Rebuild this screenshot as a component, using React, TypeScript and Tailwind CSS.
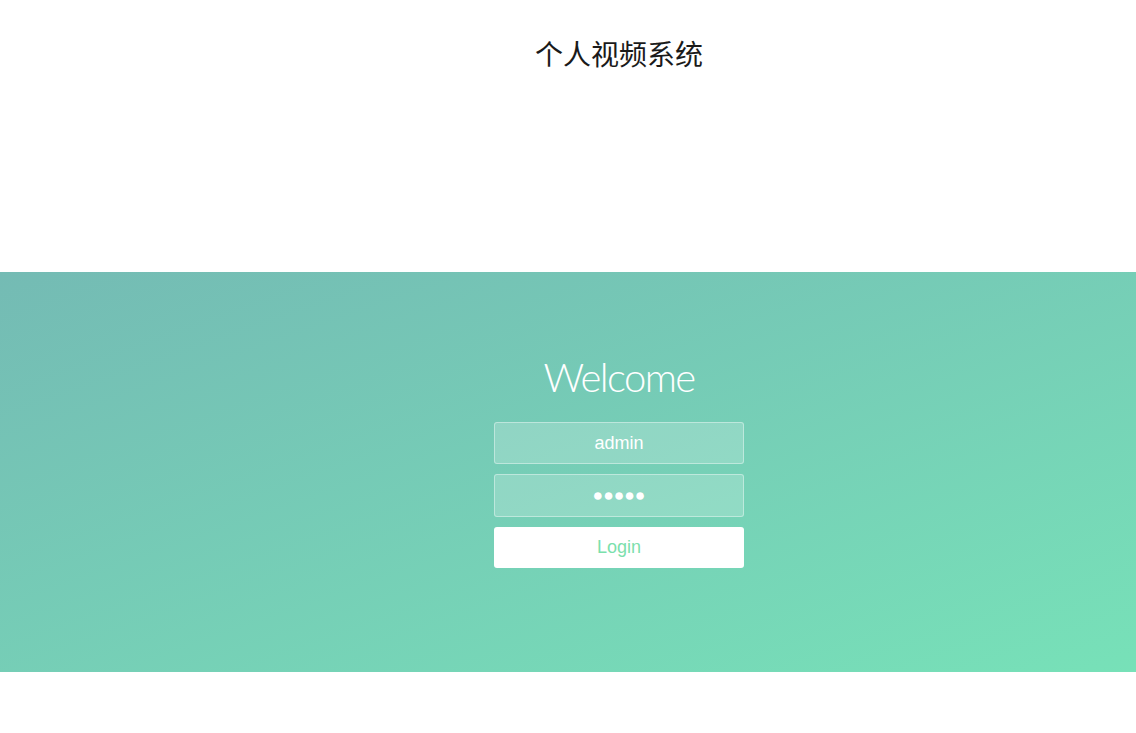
export default function App() {
  return (
    <div className="min-h-[733px] bg-white font-['Liberation_Sans',sans-serif]">
      <header className="h-[272px] pl-[102px] pt-[33px] flex justify-center">
        <h1 className="text-[28px] leading-[40px] text-[#1a1a1a] font-['Noto_Sans_CJK_SC',sans-serif]">
          个人视频系统
        </h1>
      </header>

      <section className="h-[400px] bg-gradient-to-br from-[#74bbb4] to-[#77e1b8]">
        <div className="pl-[102px] pt-[80px] flex flex-col items-center">
          <h2 className="text-[40px] leading-[50px] font-light text-white font-['Lato',sans-serif] tracking-[-1.6px]">
            Welcome
          </h2>
          <form className="mt-[20px] flex flex-col gap-[10px] w-[250px]">
            <input
              type="text"
              defaultValue="admin"
              readOnly
              className="h-[42px] w-full rounded-[3px] border border-white/40 bg-white/20 px-[15px] text-center text-[18px] text-white outline-none"
            />
            <input
              type="text"
              aria-label="password"
              defaultValue="●●●●●"
              readOnly
              className="h-[43px] w-full rounded-[3px] border border-white/40 bg-white/20 px-[15px] text-center text-[17.5px] text-white outline-none"
            />
            <button
              type="button"
              className="h-[41px] w-full rounded-[3px] bg-white text-[18px] text-[#7be0ac]"
            >
              Login
            </button>
          </form>
        </div>
      </section>
    </div>
  );
}
